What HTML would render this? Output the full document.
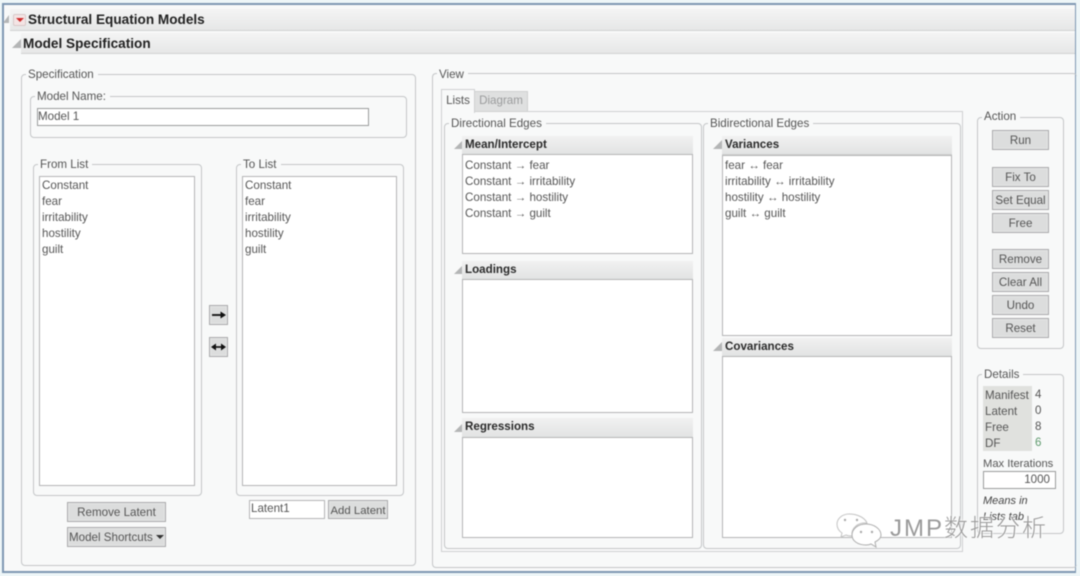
<!DOCTYPE html>
<html><head><meta charset="utf-8"><style>
html,body{margin:0;padding:0}
body{width:1080px;height:576px;overflow:hidden;background:#eef6f8;position:relative}
#p{position:absolute;left:0;top:0;width:1080px;height:576px;filter:blur(.5px);font:11.6px "Liberation Sans","Noto Sans CJK SC",sans-serif;color:#555}
#p div{position:absolute;box-sizing:border-box;white-space:nowrap}
.g{border:1px solid #c4c6c8;border-radius:4px}
.l{background:#f8f9f9;padding:0 4px 0 2px;line-height:16px;height:15px}
.lb{background:#fff;border:1px solid #b4b5b6}
.h{background:linear-gradient(#f1f1f1,#e2e3e3);border-bottom:1px solid #cfd0d0;font-weight:bold;color:#2b2b2b;line-height:17px;padding-left:3px;font-size:11.6px}
.b{background:#dcdddd;border:1px solid #a9aaab;text-align:center;line-height:20px;color:#555;box-shadow:inset 0 0 0 1px #e4e5e5}
.t{line-height:16px;left:0}
.tri{width:0;height:0;border-style:solid;border-width:0 0 9px 9px;border-color:transparent transparent #b4b5b6 transparent}
</style></head><body><div id="p">
<div style="left:2px;top:3px;width:1074px;height:570px;background:#f8f9f9;border:2px solid #7f97b2;border-right-width:1px"></div>

<div style="left:10px;top:9px;width:1065px;height:22px;background:linear-gradient(#f4f4f4,#e6e7e7);border-bottom:1px solid #d2d3d3"></div>
<div class="tri" style="left:3px;top:15px;border-width:0 0 8px 6px"></div>
<div style="left:13px;top:14px;width:13px;height:12px;background:#f4e4e4;border:1px solid #d8c8c8;border-radius:2px"></div>
<div style="left:16px;top:18px;width:0;height:0;border-style:solid;border-width:4px 4px 0 4px;border-color:#cf2a2a transparent transparent"></div>
<div style="left:28px;top:11px;font-weight:bold;font-size:13.6px;line-height:18px;color:#222">Structural Equation Models</div>
<div style="left:21px;top:33px;width:1054px;height:21px;background:linear-gradient(#f4f4f4,#e6e7e7);border-bottom:1px solid #d2d3d3"></div>
<div class="tri" style="left:12px;top:39px"></div>
<div style="left:23px;top:35px;font-weight:bold;font-size:13.6px;line-height:18px;color:#222">Model Specification</div>

<div class="g" style="left:21px;top:74px;width:395px;height:492px"></div>
<div class="l" style="left:26px;top:67px">Specification</div>
<div class="g" style="left:30px;top:96px;width:377px;height:42px"></div>
<div class="l" style="left:35px;top:89px">Model Name:</div>
<div style="left:37px;top:108px;width:332px;height:18px;background:#fff;border:1px solid #9b9c9d;line-height:15px;padding-left:0">Model 1</div>

<div class="g" style="left:33px;top:164px;width:169px;height:332px"></div>
<div class="l" style="left:38px;top:157px">From List</div>
<div class="lb" style="left:39px;top:176px;width:156px;height:310px;padding:1px 2px;line-height:16.1px;white-space:normal">Constant<br>fear<br>irritability<br>hostility<br>guilt</div>
<div class="g" style="left:236px;top:164px;width:168px;height:332px"></div>
<div class="l" style="left:241px;top:157px">To List</div>
<div class="lb" style="left:242px;top:176px;width:155px;height:310px;padding:1px 2px;line-height:16.1px;white-space:normal">Constant<br>fear<br>irritability<br>hostility<br>guilt</div>

<div class="b" style="left:209px;top:305px;width:19px;height:20px"></div>
<div class="b" style="left:209px;top:337px;width:19px;height:20px"></div>
<svg style="position:absolute;left:209px;top:305px" width="19" height="52" viewBox="0 0 19 52"><path d="M3 10H15" stroke="#111" stroke-width="1.8"/><path d="M11.5 6.5L17 10L11.5 13.5Z" fill="#111"/><path d="M4 42H15" stroke="#111" stroke-width="1.6"/><path d="M7 38.5L2 42L7 45.5Z M12 38.5L17 42L12 45.5Z" fill="#111"/></svg>

<div class="b" style="left:67px;top:502px;width:99px;height:20px">Remove Latent</div>
<div class="b" style="left:67px;top:527px;width:99px;height:20px;text-align:left;padding-left:1px">Model Shortcuts</div>
<div style="left:156px;top:535px;width:0;height:0;border-style:solid;border-width:4px 4px 0 4px;border-color:#333 transparent transparent"></div>
<div style="left:249px;top:500px;width:76px;height:19px;background:#fff;border:1px solid #b4b5b6;line-height:16px;padding-left:1px">Latent1</div>
<div class="b" style="left:328px;top:500px;width:60px;height:19px;white-space:nowrap;font-size:11.4px">Add Latent</div>

<div class="g" style="left:432px;top:73px;width:645px;height:495px;border-right:none"></div>
<div class="l" style="left:437px;top:67px">View</div>
<div style="left:441px;top:111px;width:522px;height:441px;border:1px solid #cfd0d1;background:#f8f9f9"></div>
<div style="left:474px;top:91px;width:54px;height:21px;background:#dfe0e0;border:1px solid #cfd0d0;color:#9a9b9c;line-height:18px;text-align:center">Diagram</div>
<div style="left:441px;top:89px;width:34px;height:24px;background:#f8f9f9;border:1px solid #cfd0d1;border-bottom:none;line-height:21px;text-align:center">Lists</div>

<div class="g" style="left:444px;top:123px;width:258px;height:426px"></div>
<div class="l" style="left:449px;top:116px">Directional Edges</div>
<div class="g" style="left:703px;top:123px;width:258px;height:426px"></div>
<div class="l" style="left:708px;top:116px">Bidirectional Edges</div>

<div class="tri" style="left:454px;top:140px"></div>
<div class="h" style="left:462px;top:136px;width:231px;height:19px">Mean/Intercept</div>
<div class="lb" style="left:462px;top:154px;width:231px;height:100px"><div class="t" style="top:3px;left:2px;white-space:pre">Constant → fear
Constant → irritability
Constant → hostility
Constant → guilt</div></div>
<div class="tri" style="left:454px;top:265px"></div>
<div class="h" style="left:462px;top:261px;width:231px;height:19px">Loadings</div>
<div class="lb" style="left:462px;top:279px;width:231px;height:134px"></div>
<div class="tri" style="left:454px;top:423px"></div>
<div class="h" style="left:462px;top:418px;width:231px;height:20px">Regressions</div>
<div class="lb" style="left:462px;top:437px;width:231px;height:101px"></div>

<div class="tri" style="left:713px;top:140px"></div>
<div class="h" style="left:722px;top:136px;width:230px;height:19px">Variances</div>
<div class="lb" style="left:722px;top:155px;width:230px;height:181px"><div class="t" style="top:2px;left:2px;white-space:pre">fear ↔ fear
irritability ↔ irritability
hostility ↔ hostility
guilt ↔ guilt</div></div>
<div class="tri" style="left:713px;top:342px"></div>
<div class="h" style="left:722px;top:338px;width:230px;height:19px">Covariances</div>
<div class="lb" style="left:722px;top:356px;width:230px;height:182px"></div>

<div class="g" style="left:977px;top:117px;width:87px;height:232px"></div>
<div class="l" style="left:982px;top:109px">Action</div>
<div class="b" style="left:992px;top:130px;width:57px;height:20px">Run</div>
<div class="b" style="left:992px;top:167px;width:57px;height:20px">Fix To</div>
<div class="b" style="left:992px;top:190px;width:57px;height:20px">Set Equal</div>
<div class="b" style="left:992px;top:213px;width:57px;height:20px">Free</div>
<div class="b" style="left:992px;top:249px;width:57px;height:20px">Remove</div>
<div class="b" style="left:992px;top:272px;width:57px;height:20px">Clear All</div>
<div class="b" style="left:992px;top:295px;width:57px;height:20px">Undo</div>
<div class="b" style="left:992px;top:318px;width:57px;height:20px">Reset</div>

<div class="g" style="left:977px;top:374px;width:87px;height:160px"></div>
<div class="l" style="left:982px;top:367px">Details</div>
<div style="left:983px;top:386px;width:49px;height:65px;background:#e0e1de;padding:2px 2px;line-height:16px;white-space:normal">Manifest<br>Latent<br>Free<br>DF</div>
<div style="left:1035px;top:386px;line-height:16px;padding-top:1px;white-space:normal">4<br>0<br>8<br><span style="color:#5f9a6e">6</span></div>
<div style="left:983px;top:457px;line-height:14px;font-size:11.2px">Max Iterations</div>
<div style="left:983px;top:471px;width:73px;height:18px;background:#fff;border:1px solid #9b9c9d;line-height:15px;text-align:right;padding-right:5px">1000</div>
<div style="left:983px;top:493px;font-style:italic;line-height:16px;font-size:11px;white-space:normal;color:#444">Means in<br>Lists tab</div>

<svg style="position:absolute;left:836px;top:512px" width="50" height="36" viewBox="0 0 50 36"><path d="M13 2C6 2 1 7 1 12C1 16 3 19 6 21L5 25L10 23C12 24 14 24 16 24C15 16 22 10 31 11C29 6 22 2 13 2Z" fill="#fff" stroke="#c4c4c4" stroke-width="1"/><path d="M30 12C22 12 16 17 16 23C16 29 22 33 30 33C32 33 33 33 35 32L40 35L39 30C43 28 45 26 45 23C45 17 38 12 30 12Z" fill="#fff" stroke="#adadad" stroke-width="1"/><circle cx="9" cy="8" r="1.2" fill="#aaa"/><circle cx="21" cy="8" r="1.2" fill="#aaa"/><circle cx="25" cy="20" r="1.2" fill="#aaa"/><circle cx="36" cy="20" r="1.2" fill="#aaa"/></svg>
<div style="left:890px;top:514px;font-size:24px;line-height:30px;color:#9a9a9a;font-weight:300;font-family:'Liberation Sans','Noto Sans CJK SC',sans-serif;letter-spacing:2px;text-shadow:0 0 2px #fff,0 0 2px #fff">JMP数据分析</div>
</div></body></html>
